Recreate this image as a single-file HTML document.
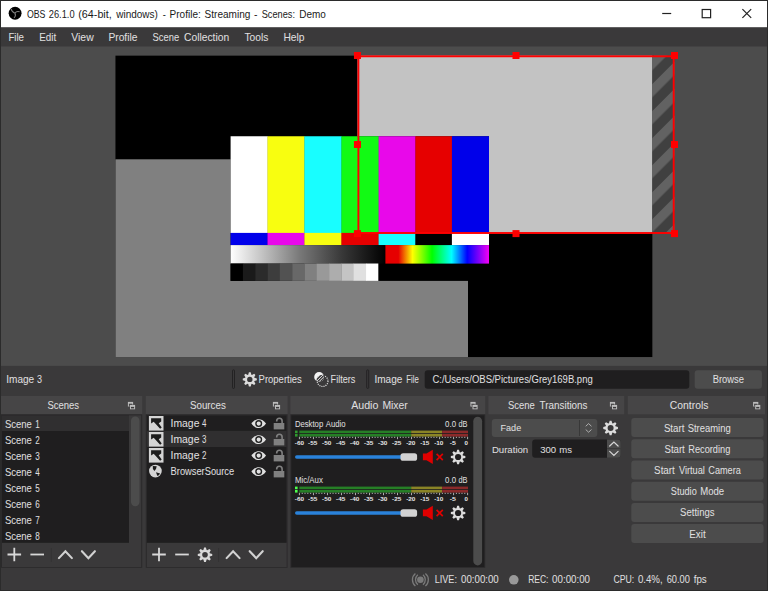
<!DOCTYPE html>
<html lang="en"><head><meta charset="utf-8"><title>OBS 26.1.0 (64-bit, windows) - Profile: Streaming - Scenes: Demo</title>
<style>
html,body{margin:0;padding:0;background:#3a393a;}
body{width:768px;height:591px;position:relative;overflow:hidden;font-family:"Liberation Sans",sans-serif;}
#bg{position:absolute;left:0;top:0;}
.t{position:absolute;white-space:nowrap;transform-origin:0 0;line-height:1;display:block;}
</style></head><body>
<svg id="bg" width="768" height="591" viewBox="0 0 768 591">
<rect x="0" y="0" width="768" height="591" fill="#3a393a"/>
<rect x="0" y="0" width="768" height="27.2" fill="#fff"/>
<rect x="0" y="46.5" width="768" height="319.4" fill="#4c4c4c"/>
<rect x="115.45" y="55.65" width="536.90" height="301.40" fill="#000"/>
<rect x="115.45" y="159.3" width="352.55" height="197.75" fill="#808080"/>
<defs><pattern id="hatch" width="19.1" height="19.1" patternUnits="userSpaceOnUse" patternTransform="translate(652.4 57) rotate(-45)"><rect width="19.1" height="19.1" fill="#626262"/><rect y="9.2" width="19.1" height="9.9" fill="#404040"/></pattern><linearGradient id="gg" x1="0" x2="1"><stop offset="0" stop-color="#fff"/><stop offset="0.2" stop-color="#c4c4c4"/><stop offset="0.448" stop-color="#787878"/><stop offset="0.72" stop-color="#383838"/><stop offset="1" stop-color="#000"/></linearGradient><linearGradient id="rb" x1="0" x2="1"><stop offset="0" stop-color="#e60000"/><stop offset="0.125" stop-color="#e60000"/><stop offset="0.262" stop-color="#ffff00"/><stop offset="0.45" stop-color="#00ff00"/><stop offset="0.639" stop-color="#00ffff"/><stop offset="0.79" stop-color="#0000ff"/><stop offset="1" stop-color="#f400f4"/></linearGradient></defs>
<rect x="357.5" y="55.5" width="294.85" height="178" fill="#c3c3c3"/>
<rect x="652.35" y="55.5" width="22.15" height="178" fill="url(#hatch)"/>
<rect x="230.60" y="136.25" width="258.40" height="144.65" fill="#000"/>
<rect x="230.60" y="136.25" width="37.20" height="96.75" fill="#ffffff"/>
<rect x="267.50" y="136.25" width="37.20" height="96.75" fill="#f8fe10"/>
<rect x="304.40" y="136.25" width="37.35" height="96.75" fill="#18feff"/>
<rect x="341.45" y="136.25" width="37.45" height="96.75" fill="#12fa14"/>
<rect x="378.60" y="136.25" width="37.10" height="96.75" fill="#e808ea"/>
<rect x="415.40" y="136.25" width="36.80" height="96.75" fill="#e60000"/>
<rect x="451.90" y="136.25" width="37.10" height="96.75" fill="#0000ea"/>
<rect x="230.60" y="232.9" width="37.20" height="12.3" fill="#0000ea"/>
<rect x="267.50" y="232.9" width="37.20" height="12.3" fill="#e808ea"/>
<rect x="304.40" y="232.9" width="37.35" height="12.3" fill="#f8fe10"/>
<rect x="341.45" y="232.9" width="37.45" height="12.3" fill="#e60000"/>
<rect x="378.60" y="232.9" width="37.10" height="12.3" fill="#18feff"/>
<rect x="415.40" y="232.9" width="36.80" height="12.3" fill="#000000"/>
<rect x="451.90" y="232.9" width="37.10" height="12.3" fill="#ffffff"/>
<rect x="230.60" y="245.1" width="155.00" height="18.5" fill="url(#gg)"/>
<rect x="385.4" y="245.1" width="103.60" height="18.5" fill="url(#rb)"/>
<rect x="230.60" y="263.5" width="12.61" height="17.4" fill="rgb(0,0,0)"/>
<rect x="242.91" y="263.5" width="12.61" height="17.4" fill="rgb(26,26,26)"/>
<rect x="255.22" y="263.5" width="12.61" height="17.4" fill="rgb(43,43,43)"/>
<rect x="267.53" y="263.5" width="12.61" height="17.4" fill="rgb(61,61,61)"/>
<rect x="279.84" y="263.5" width="12.61" height="17.4" fill="rgb(82,82,82)"/>
<rect x="292.15" y="263.5" width="12.61" height="17.4" fill="rgb(104,104,104)"/>
<rect x="304.46" y="263.5" width="12.61" height="17.4" fill="rgb(128,128,128)"/>
<rect x="316.77" y="263.5" width="12.61" height="17.4" fill="rgb(153,153,153)"/>
<rect x="329.08" y="263.5" width="12.61" height="17.4" fill="rgb(173,173,173)"/>
<rect x="341.39" y="263.5" width="12.61" height="17.4" fill="rgb(196,196,196)"/>
<rect x="353.70" y="263.5" width="12.61" height="17.4" fill="rgb(224,224,224)"/>
<rect x="366.01" y="263.5" width="12.31" height="17.4" fill="rgb(255,255,255)"/>
<rect x="358.4" y="56.3" width="315.3" height="176.7" fill="none" stroke="#ff0000" stroke-width="1.9"/>
<rect x="353.95" y="52.00" width="7" height="7" fill="#ff0000"/>
<rect x="353.95" y="141.00" width="7" height="7" fill="#ff0000"/>
<rect x="353.95" y="230.10" width="7" height="7" fill="#ff0000"/>
<rect x="512.50" y="52.00" width="7" height="7" fill="#ff0000"/>
<rect x="512.50" y="230.10" width="7" height="7" fill="#ff0000"/>
<rect x="671.00" y="52.00" width="7" height="7" fill="#ff0000"/>
<rect x="671.00" y="141.00" width="7" height="7" fill="#ff0000"/>
<rect x="671.00" y="230.10" width="7" height="7" fill="#ff0000"/>
<rect x="0" y="0" width="768" height="1" fill="#2b2b2b"/>
<rect x="0" y="0" width="1" height="591" fill="#2b2b2b"/>
<rect x="767" y="0" width="1" height="591" fill="#2b2b2b"/>
<rect x="0" y="590" width="768" height="1" fill="#2b2b2b"/>
<circle cx="15.1" cy="13.2" r="6.45" fill="#000"/>
<path d="M15 13.2 Q12 12.4 11.2 9.2 M15 13.2 Q16.4 10.8 19.6 11.8 M15 13.2 Q16.2 15.8 14 17.8" stroke="#808080" stroke-width="1.1" fill="none"/>
<path d="M662.2 13.5 h9" stroke="#222" stroke-width="1.2"/>
<rect x="702.2" y="9.5" width="8.4" height="8.2" fill="none" stroke="#222" stroke-width="1.2"/>
<path d="M742.4 9.1 l8.8 8.8 M751.2 9.1 l-8.8 8.8" stroke="#222" stroke-width="1.2"/>
<rect x="232.50" y="369.9" width="2" height="18.5" rx="0.8" fill="none" stroke="#232223" stroke-width="1"/>
<rect x="366.70" y="369.9" width="2" height="18.5" rx="0.8" fill="none" stroke="#232223" stroke-width="1"/>
<path d="M248.21 374.76 L248.91 372.36 L250.69 372.36 L251.39 374.76 L251.96 375.00 L254.15 373.79 L255.41 375.05 L254.20 377.24 L254.44 377.81 L256.84 378.51 L256.84 380.29 L254.44 380.99 L254.20 381.56 L255.41 383.75 L254.15 385.01 L251.96 383.80 L251.39 384.04 L250.69 386.44 L248.91 386.44 L248.21 384.04 L247.64 383.80 L245.45 385.01 L244.19 383.75 L245.40 381.56 L245.16 380.99 L242.76 380.29 L242.76 378.51 L245.16 377.81 L245.40 377.24 L244.19 375.05 L245.45 373.79 L247.64 375.00 Z M247.10 379.40 a2.70 2.70 0 1 0 5.40 0 a2.70 2.70 0 1 0 -5.40 0 Z" fill="#dcdcdc" fill-rule="evenodd"/>
<clipPath id="fc1"><circle cx="319.1" cy="376.9" r="4.9"/></clipPath><clipPath id="fc2"><circle cx="322.4" cy="380.8" r="6.0"/></clipPath>
<circle cx="322.6" cy="381.1" r="5.4" fill="none" stroke="#dcdcdc" stroke-width="1.2" stroke-dasharray="1.1 1.0"/>
<circle cx="319.1" cy="376.9" r="4.9" fill="#f4f4f4"/>
<g clip-path="url(#fc1)"><g clip-path="url(#fc2)"><rect x="312" y="370" width="20" height="20" fill="#3a393a"/><path d="M302.52 378.32 l16 -16 M303.94 379.74 l16 -16 M305.36 381.16 l16 -16 M306.78 382.58 l16 -16 M308.20 384.00 l16 -16 M309.62 385.42 l16 -16 M311.04 386.84 l16 -16 M312.46 388.26 l16 -16 M313.88 389.68 l16 -16 M315.30 391.10 l16 -16 M316.72 392.52 l16 -16 M318.14 393.94 l16 -16 M319.56 395.36 l16 -16 M320.98 396.78 l16 -16 M322.40 398.20 l16 -16 M323.82 399.62 l16 -16" stroke="#f0f0f0" stroke-width="0.95"/></g></g>
<rect x="424.7" y="370.3" width="264.6" height="18.4" rx="3" fill="#1f1e1f"/>
<rect x="694.7" y="370.3" width="67.2" height="18.4" rx="3" fill="#4c4c4c"/>
<rect x="1.00" y="396.0" width="141.20" height="18.3" fill="#464546"/>
<rect x="145.80" y="396.0" width="141.80" height="18.3" fill="#464546"/>
<rect x="290.40" y="396.0" width="194.80" height="18.3" fill="#464546"/>
<rect x="488.40" y="396.0" width="135.80" height="18.3" fill="#464546"/>
<rect x="627.80" y="396.0" width="137.20" height="18.3" fill="#464546"/>
<rect x="127.90" y="401.90" width="5.2" height="4.6" fill="#bcbcbc"/><rect x="128.90" y="403.70" width="3.2" height="2" fill="#464546"/><rect x="129.50" y="404.50" width="6" height="5.2" fill="#464546"/><rect x="130.00" y="404.90" width="5.1" height="4.4" fill="#bcbcbc"/><rect x="131.00" y="406.90" width="3.1" height="1.5" fill="#3a393a"/>
<rect x="272.90" y="401.90" width="5.2" height="4.6" fill="#bcbcbc"/><rect x="273.90" y="403.70" width="3.2" height="2" fill="#464546"/><rect x="274.50" y="404.50" width="6" height="5.2" fill="#464546"/><rect x="275.00" y="404.90" width="5.1" height="4.4" fill="#bcbcbc"/><rect x="276.00" y="406.90" width="3.1" height="1.5" fill="#3a393a"/>
<rect x="470.40" y="401.90" width="5.2" height="4.6" fill="#bcbcbc"/><rect x="471.40" y="403.70" width="3.2" height="2" fill="#464546"/><rect x="472.00" y="404.50" width="6" height="5.2" fill="#464546"/><rect x="472.50" y="404.90" width="5.1" height="4.4" fill="#bcbcbc"/><rect x="473.50" y="406.90" width="3.1" height="1.5" fill="#3a393a"/>
<rect x="609.90" y="401.90" width="5.2" height="4.6" fill="#bcbcbc"/><rect x="610.90" y="403.70" width="3.2" height="2" fill="#464546"/><rect x="611.50" y="404.50" width="6" height="5.2" fill="#464546"/><rect x="612.00" y="404.90" width="5.1" height="4.4" fill="#bcbcbc"/><rect x="613.00" y="406.90" width="3.1" height="1.5" fill="#3a393a"/>
<rect x="753.10" y="401.90" width="5.2" height="4.6" fill="#bcbcbc"/><rect x="754.10" y="403.70" width="3.2" height="2" fill="#464546"/><rect x="754.70" y="404.50" width="6" height="5.2" fill="#464546"/><rect x="755.20" y="404.90" width="5.1" height="4.4" fill="#bcbcbc"/><rect x="756.20" y="406.90" width="3.1" height="1.5" fill="#3a393a"/>
<rect x="1" y="414.3" width="141.2" height="153.5" fill="#2b2a2b"/>
<rect x="2" y="415.4" width="139.2" height="151.6" fill="#3a393a"/>
<rect x="2" y="415.4" width="127" height="127.4" fill="#1f1e1f"/>
<rect x="2" y="415.4" width="127" height="15.6" fill="#302f30"/>
<rect x="131.0" y="416.6" width="8.5" height="89.6" rx="4.2" fill="#4c4c4c"/>
<path d="M7.50 554.50 h13.6 M14.30 547.70 v13.6" stroke="#d8d8d8" stroke-width="1.8" fill="none"/>
<path d="M30.40 554.50 h13.6" stroke="#d8d8d8" stroke-width="1.8" fill="none"/>
<rect x="50.8" y="548" width="1" height="14" fill="#333233"/>
<path d="M58.90 558.10 L65.40 551.20 L71.90 558.10" stroke="#d2d2d2" stroke-width="2.10" stroke-linecap="round" fill="none"/>
<path d="M81.90 551.20 L88.40 558.10 L94.90 551.20" stroke="#d2d2d2" stroke-width="2.10" stroke-linecap="round" fill="none"/>
<rect x="145.8" y="414.3" width="141.8" height="153.5" fill="#2b2a2b"/>
<rect x="146.8" y="415.4" width="139.8" height="151.6" fill="#3a393a"/>
<rect x="146.8" y="415.4" width="139.8" height="127.4" fill="#1f1e1f"/>
<rect x="146.8" y="430.8" width="139.8" height="16.2" fill="#302f30"/>
<rect x="148.90" y="416.00" width="14.6" height="14.6" fill="#d4d4d4"/><polygon points="151.10,418.20 161.20,418.20 161.20,421.60 158.70,423.20 161.70,427.60 160.10,428.80 153.70,421.80 151.10,423.40" fill="#1c1c1c"/>
<rect x="148.90" y="432.00" width="14.6" height="14.6" fill="#d4d4d4"/><polygon points="151.10,434.20 161.20,434.20 161.20,437.60 158.70,439.20 161.70,443.60 160.10,444.80 153.70,437.80 151.10,439.40" fill="#1c1c1c"/>
<rect x="148.90" y="448.00" width="14.6" height="14.6" fill="#d4d4d4"/><polygon points="151.10,450.20 161.20,450.20 161.20,453.60 158.70,455.20 161.70,459.60 160.10,460.80 153.70,453.80 151.10,455.40" fill="#1c1c1c"/>
<circle cx="155.40" cy="471.10" r="6.35" fill="#d4d4d4"/><polygon points="152.80,465.90 156.70,466.30 156.10,468.70 154.50,470.90 152.90,469.10" fill="#1c1c1c"/><polygon points="156.00,472.30 160.10,473.40 158.80,475.30 157.40,476.00" fill="#1c1c1c"/>
<path d="M251.40 423.60 C255.10 417.70 262.30 417.70 266.00 423.60 C262.30 429.50 255.10 429.50 251.40 423.60 Z" fill="#e0e0e0"/><circle cx="258.70" cy="423.60" r="2.8" fill="none" stroke="#222" stroke-width="1.4"/>
<rect x="273.70" y="423.00" width="10.6" height="6.4" fill="#808080"/><path d="M276.70 421.40 v-0.5 a2.7 2.7 0 0 1 5.4 0 v2.6" fill="none" stroke="#808080" stroke-width="1.6"/>
<path d="M251.40 439.60 C255.10 433.70 262.30 433.70 266.00 439.60 C262.30 445.50 255.10 445.50 251.40 439.60 Z" fill="#e0e0e0"/><circle cx="258.70" cy="439.60" r="2.8" fill="none" stroke="#222" stroke-width="1.4"/>
<rect x="273.70" y="439.00" width="10.6" height="6.4" fill="#808080"/><path d="M276.70 437.40 v-0.5 a2.7 2.7 0 0 1 5.4 0 v2.6" fill="none" stroke="#808080" stroke-width="1.6"/>
<path d="M251.40 455.60 C255.10 449.70 262.30 449.70 266.00 455.60 C262.30 461.50 255.10 461.50 251.40 455.60 Z" fill="#e0e0e0"/><circle cx="258.70" cy="455.60" r="2.8" fill="none" stroke="#222" stroke-width="1.4"/>
<rect x="273.70" y="455.00" width="10.6" height="6.4" fill="#808080"/><path d="M276.70 453.40 v-0.5 a2.7 2.7 0 0 1 5.4 0 v2.6" fill="none" stroke="#808080" stroke-width="1.6"/>
<path d="M251.40 471.60 C255.10 465.70 262.30 465.70 266.00 471.60 C262.30 477.50 255.10 477.50 251.40 471.60 Z" fill="#e0e0e0"/><circle cx="258.70" cy="471.60" r="2.8" fill="none" stroke="#222" stroke-width="1.4"/>
<rect x="273.70" y="471.00" width="10.6" height="6.4" fill="#808080"/><path d="M276.70 469.40 v-0.5 a2.7 2.7 0 0 1 5.4 0 v2.6" fill="none" stroke="#808080" stroke-width="1.6"/>
<path d="M152.20 554.50 h13.6 M159.00 547.70 v13.6" stroke="#d8d8d8" stroke-width="1.8" fill="none"/>
<path d="M175.20 554.50 h13.6" stroke="#d8d8d8" stroke-width="1.8" fill="none"/>
<path d="M203.38 550.07 L204.09 547.56 L205.91 547.56 L206.62 550.07 L207.20 550.31 L209.47 549.03 L210.77 550.33 L209.49 552.60 L209.73 553.18 L212.24 553.89 L212.24 555.71 L209.73 556.42 L209.49 557.00 L210.77 559.27 L209.47 560.57 L207.20 559.29 L206.62 559.53 L205.91 562.04 L204.09 562.04 L203.38 559.53 L202.80 559.29 L200.53 560.57 L199.23 559.27 L200.51 557.00 L200.27 556.42 L197.76 555.71 L197.76 553.89 L200.27 553.18 L200.51 552.60 L199.23 550.33 L200.53 549.03 L202.80 550.31 Z M202.20 554.80 a2.80 2.80 0 1 0 5.60 0 a2.80 2.80 0 1 0 -5.60 0 Z" fill="#d8d8d8" fill-rule="evenodd"/>
<rect x="218.1" y="548" width="1" height="14" fill="#333233"/>
<path d="M226.60 558.10 L233.10 551.20 L239.60 558.10" stroke="#d2d2d2" stroke-width="2.10" stroke-linecap="round" fill="none"/>
<path d="M249.70 551.20 L256.20 558.10 L262.70 551.20" stroke="#d2d2d2" stroke-width="2.10" stroke-linecap="round" fill="none"/>
<rect x="290.4" y="414.3" width="194.8" height="153.5" fill="#2b2a2b"/>
<rect x="291.4" y="415.4" width="192.8" height="151.6" fill="#1f1e1f"/>
<rect x="473.3" y="416.8" width="8.8" height="148.6" rx="4.4" fill="#4c4c4c"/>
<rect x="295" y="430.60" width="2.6" height="2.6" fill="#2e9a2e"/>
<rect x="299.3" y="430.60" width="111.9" height="2.6" fill="#267f26"/>
<rect x="411.2" y="430.60" width="30.9" height="2.6" fill="#8a8426"/>
<rect x="442.1" y="430.60" width="25.9" height="2.6" fill="#8a2a2a"/>
<rect x="295" y="434.00" width="2.6" height="2.6" fill="#2e9a2e"/>
<rect x="299.3" y="434.00" width="111.9" height="2.6" fill="#267f26"/>
<rect x="411.2" y="434.00" width="30.9" height="2.6" fill="#8a8426"/>
<rect x="442.1" y="434.00" width="25.9" height="2.6" fill="#8a2a2a"/>
<path d="M467.60 436.80 v2.40 M464.80 436.80 v1.20 M461.99 436.80 v1.20 M459.19 436.80 v1.20 M456.39 436.80 v1.20 M453.59 436.80 v2.40 M450.78 436.80 v1.20 M447.98 436.80 v1.20 M445.18 436.80 v1.20 M442.37 436.80 v1.20 M439.57 436.80 v2.40 M436.77 436.80 v1.20 M433.96 436.80 v1.20 M431.16 436.80 v1.20 M428.36 436.80 v1.20 M425.56 436.80 v2.40 M422.75 436.80 v1.20 M419.95 436.80 v1.20 M417.15 436.80 v1.20 M414.34 436.80 v1.20 M411.54 436.80 v2.40 M408.74 436.80 v1.20 M405.93 436.80 v1.20 M403.13 436.80 v1.20 M400.33 436.80 v1.20 M397.53 436.80 v2.40 M394.72 436.80 v1.20 M391.92 436.80 v1.20 M389.12 436.80 v1.20 M386.31 436.80 v1.20 M383.51 436.80 v2.40 M380.71 436.80 v1.20 M377.90 436.80 v1.20 M375.10 436.80 v1.20 M372.30 436.80 v1.20 M369.50 436.80 v2.40 M366.69 436.80 v1.20 M363.89 436.80 v1.20 M361.09 436.80 v1.20 M358.28 436.80 v1.20 M355.48 436.80 v2.40 M352.68 436.80 v1.20 M349.87 436.80 v1.20 M347.07 436.80 v1.20 M344.27 436.80 v1.20 M341.47 436.80 v2.40 M338.66 436.80 v1.20 M335.86 436.80 v1.20 M333.06 436.80 v1.20 M330.25 436.80 v1.20 M327.45 436.80 v2.40 M324.65 436.80 v1.20 M321.84 436.80 v1.20 M319.04 436.80 v1.20 M316.24 436.80 v1.20 M313.44 436.80 v2.40 M310.63 436.80 v1.20 M307.83 436.80 v1.20 M305.03 436.80 v1.20 M302.22 436.80 v1.20 M299.42 436.80 v2.40 " stroke="#d4d4d4" stroke-width="0.8"/>
<rect x="295" y="455.20" width="110" height="3.5" rx="1.75" fill="#2a82da"/>
<rect x="400.5" y="453.20" width="16.6" height="7.6" rx="2.6" fill="#d2d2d2"/>
<path d="M422.9 453.50 h3.6 l6.3 -3.7 v14.2 l-6.3 -3.7 h-3.6 Z" fill="#e00000"/>
<path d="M436.6 453.90 l6.2 6.2 M442.8 453.90 l-6.2 6.2" stroke="#e00000" stroke-width="1.7"/>
<path d="M456.48 452.27 L457.19 449.76 L459.01 449.76 L459.72 452.27 L460.30 452.51 L462.57 451.23 L463.87 452.53 L462.59 454.80 L462.83 455.38 L465.34 456.09 L465.34 457.91 L462.83 458.62 L462.59 459.20 L463.87 461.47 L462.57 462.77 L460.30 461.49 L459.72 461.73 L459.01 464.24 L457.19 464.24 L456.48 461.73 L455.90 461.49 L453.63 462.77 L452.33 461.47 L453.61 459.20 L453.37 458.62 L450.86 457.91 L450.86 456.09 L453.37 455.38 L453.61 454.80 L452.33 452.53 L453.63 451.23 L455.90 452.51 Z M455.00 457.00 a3.10 3.10 0 1 0 6.20 0 a3.10 3.10 0 1 0 -6.20 0 Z" fill="#dcdcdc" fill-rule="evenodd"/>
<rect x="295" y="486.60" width="2.6" height="2.6" fill="#4cff4c"/>
<rect x="299.3" y="486.60" width="111.9" height="2.6" fill="#267f26"/>
<rect x="411.2" y="486.60" width="30.9" height="2.6" fill="#8a8426"/>
<rect x="442.1" y="486.60" width="25.9" height="2.6" fill="#8a2a2a"/>
<rect x="295" y="490.00" width="2.6" height="2.6" fill="#4cff4c"/>
<rect x="299.3" y="490.00" width="111.9" height="2.6" fill="#267f26"/>
<rect x="411.2" y="490.00" width="30.9" height="2.6" fill="#8a8426"/>
<rect x="442.1" y="490.00" width="25.9" height="2.6" fill="#8a2a2a"/>
<path d="M467.60 492.80 v2.40 M464.80 492.80 v1.20 M461.99 492.80 v1.20 M459.19 492.80 v1.20 M456.39 492.80 v1.20 M453.59 492.80 v2.40 M450.78 492.80 v1.20 M447.98 492.80 v1.20 M445.18 492.80 v1.20 M442.37 492.80 v1.20 M439.57 492.80 v2.40 M436.77 492.80 v1.20 M433.96 492.80 v1.20 M431.16 492.80 v1.20 M428.36 492.80 v1.20 M425.56 492.80 v2.40 M422.75 492.80 v1.20 M419.95 492.80 v1.20 M417.15 492.80 v1.20 M414.34 492.80 v1.20 M411.54 492.80 v2.40 M408.74 492.80 v1.20 M405.93 492.80 v1.20 M403.13 492.80 v1.20 M400.33 492.80 v1.20 M397.53 492.80 v2.40 M394.72 492.80 v1.20 M391.92 492.80 v1.20 M389.12 492.80 v1.20 M386.31 492.80 v1.20 M383.51 492.80 v2.40 M380.71 492.80 v1.20 M377.90 492.80 v1.20 M375.10 492.80 v1.20 M372.30 492.80 v1.20 M369.50 492.80 v2.40 M366.69 492.80 v1.20 M363.89 492.80 v1.20 M361.09 492.80 v1.20 M358.28 492.80 v1.20 M355.48 492.80 v2.40 M352.68 492.80 v1.20 M349.87 492.80 v1.20 M347.07 492.80 v1.20 M344.27 492.80 v1.20 M341.47 492.80 v2.40 M338.66 492.80 v1.20 M335.86 492.80 v1.20 M333.06 492.80 v1.20 M330.25 492.80 v1.20 M327.45 492.80 v2.40 M324.65 492.80 v1.20 M321.84 492.80 v1.20 M319.04 492.80 v1.20 M316.24 492.80 v1.20 M313.44 492.80 v2.40 M310.63 492.80 v1.20 M307.83 492.80 v1.20 M305.03 492.80 v1.20 M302.22 492.80 v1.20 M299.42 492.80 v2.40 " stroke="#d4d4d4" stroke-width="0.8"/>
<rect x="295" y="511.20" width="110" height="3.5" rx="1.75" fill="#2a82da"/>
<rect x="400.5" y="509.20" width="16.6" height="7.6" rx="2.6" fill="#d2d2d2"/>
<path d="M422.9 509.50 h3.6 l6.3 -3.7 v14.2 l-6.3 -3.7 h-3.6 Z" fill="#e00000"/>
<path d="M436.6 509.90 l6.2 6.2 M442.8 509.90 l-6.2 6.2" stroke="#e00000" stroke-width="1.7"/>
<path d="M456.48 508.27 L457.19 505.76 L459.01 505.76 L459.72 508.27 L460.30 508.51 L462.57 507.23 L463.87 508.53 L462.59 510.80 L462.83 511.38 L465.34 512.09 L465.34 513.91 L462.83 514.62 L462.59 515.20 L463.87 517.47 L462.57 518.77 L460.30 517.49 L459.72 517.73 L459.01 520.24 L457.19 520.24 L456.48 517.73 L455.90 517.49 L453.63 518.77 L452.33 517.47 L453.61 515.20 L453.37 514.62 L450.86 513.91 L450.86 512.09 L453.37 511.38 L453.61 510.80 L452.33 508.53 L453.63 507.23 L455.90 508.51 Z M455.00 513.00 a3.10 3.10 0 1 0 6.20 0 a3.10 3.10 0 1 0 -6.20 0 Z" fill="#dcdcdc" fill-rule="evenodd"/>
<rect x="491.8" y="419" width="105.5" height="18" rx="3" fill="#4c4c4c"/>
<rect x="579" y="420" width="1" height="16" fill="#383838"/>
<path d="M586.00 426.00 L588.60 423.60 L591.20 426.00" stroke="#b8b8b8" stroke-width="0.90" stroke-linecap="round" fill="none"/>
<path d="M586.00 429.80 L588.60 432.20 L591.20 429.80" stroke="#b8b8b8" stroke-width="0.90" stroke-linecap="round" fill="none"/>
<path d="M608.95 423.17 L609.67 420.66 L611.53 420.66 L612.25 423.17 L612.84 423.42 L615.14 422.15 L616.45 423.46 L615.18 425.76 L615.43 426.35 L617.94 427.07 L617.94 428.93 L615.43 429.65 L615.18 430.24 L616.45 432.54 L615.14 433.85 L612.84 432.58 L612.25 432.83 L611.53 435.34 L609.67 435.34 L608.95 432.83 L608.36 432.58 L606.06 433.85 L604.75 432.54 L606.02 430.24 L605.77 429.65 L603.26 428.93 L603.26 427.07 L605.77 426.35 L606.02 425.76 L604.75 423.46 L606.06 422.15 L608.36 423.42 Z M607.60 428.00 a3.00 3.00 0 1 0 6.00 0 a3.00 3.00 0 1 0 -6.00 0 Z" fill="#dcdcdc" fill-rule="evenodd"/>
<rect x="532.2" y="439.5" width="88.5" height="18.3" rx="3" fill="#1f1e1f"/>
<path d="M607 439.5 h10.7 a3 3 0 0 1 3 3 v12.3 a3 3 0 0 1 -3 3 h-10.7 Z" fill="#4c4c4c"/>
<rect x="607" y="448.3" width="13.7" height="0.8" fill="#353535"/>
<path d="M609.70 446.00 L613.90 442.00 L618.10 446.00" stroke="#d8d8d8" stroke-width="1.20" stroke-linecap="round" fill="none"/>
<path d="M609.70 451.40 L613.90 455.40 L618.10 451.40" stroke="#d8d8d8" stroke-width="1.20" stroke-linecap="round" fill="none"/>
<rect x="631.3" y="418.10" width="132.3" height="19.0" rx="3" fill="#4c4c4c"/>
<rect x="631.3" y="439.30" width="132.3" height="19.0" rx="3" fill="#4c4c4c"/>
<rect x="631.3" y="460.50" width="132.3" height="19.0" rx="3" fill="#4c4c4c"/>
<rect x="631.3" y="481.70" width="132.3" height="19.0" rx="3" fill="#4c4c4c"/>
<rect x="631.3" y="502.90" width="132.3" height="19.0" rx="3" fill="#4c4c4c"/>
<rect x="631.3" y="524.10" width="132.3" height="19.0" rx="3" fill="#4c4c4c"/>
<circle cx="420.4" cy="579.7" r="3.3" fill="#7a7a7a"/>
<path d="M417.8 574.7 a6.6 6.6 0 0 0 0 10 M423.0 574.7 a6.6 6.6 0 0 1 0 10" stroke="#7a7a7a" stroke-width="1.3" fill="none"/>
<path d="M415.4 573.4 a8.2 8.2 0 0 0 0 12.6 M425.4 573.4 a8.2 8.2 0 0 1 0 12.6" stroke="#7a7a7a" stroke-width="1.3" fill="none"/>
<circle cx="513.8" cy="579.8" r="4.8" fill="#999"/>
</svg>
<span class="t" style="left:26px;top:8px;font-size:11.50px;color:#1a1a1a;transform:translate(0.90px,0.80px) scaleX(0.7613) rotate(0.02deg)">OBS</span>
<span class="t" style="left:48px;top:8px;font-size:11.50px;color:#1a1a1a;transform:translate(0.75px,0.80px) scaleX(0.8081) rotate(0.02deg)">26.1.0</span>
<span class="t" style="left:78px;top:8px;font-size:11.50px;color:#1a1a1a;transform:translate(0.30px,0.80px) scaleX(0.9329) rotate(0.02deg)">(64-bit,</span>
<span class="t" style="left:116px;top:8px;font-size:11.50px;color:#1a1a1a;transform:translate(0.25px,0.80px) scaleX(0.8688) rotate(0.02deg)">windows)</span>
<span class="t" style="left:162px;top:8px;font-size:11.50px;color:#1a1a1a;transform:translate(0.70px,0.80px) scaleX(0.8057) rotate(0.02deg)">-</span>
<span class="t" style="left:169px;top:8px;font-size:11.50px;color:#1a1a1a;transform:translate(0.60px,0.80px) scaleX(0.8715) rotate(0.02deg)">Profile:</span>
<span class="t" style="left:204px;top:8px;font-size:11.50px;color:#1a1a1a;transform:translate(0.60px,0.80px) scaleX(0.8736) rotate(0.02deg)">Streaming</span>
<span class="t" style="left:254px;top:8px;font-size:11.50px;color:#1a1a1a;transform:translate(0.00px,0.80px) scaleX(0.9096) rotate(0.02deg)">-</span>
<span class="t" style="left:261px;top:8px;font-size:11.50px;color:#1a1a1a;transform:translate(0.70px,0.80px) scaleX(0.8011) rotate(0.02deg)">Scenes:</span>
<span class="t" style="left:299px;top:8px;font-size:11.50px;color:#1a1a1a;transform:translate(0.20px,0.80px) scaleX(0.8667) rotate(0.02deg)">Demo</span>
<span class="t" style="left:8px;top:31px;font-size:10.80px;color:#e1e0e1;transform:translate(0.40px,0.85px) scaleX(0.8960) rotate(0.02deg)">File</span>
<span class="t" style="left:39px;top:31px;font-size:10.80px;color:#e1e0e1;transform:translate(0.20px,0.85px) scaleX(0.9133) rotate(0.02deg)">Edit</span>
<span class="t" style="left:71px;top:31px;font-size:10.80px;color:#e1e0e1;transform:translate(0.30px,0.85px) scaleX(0.9646) rotate(0.02deg)">View</span>
<span class="t" style="left:108px;top:31px;font-size:10.80px;color:#e1e0e1;transform:translate(0.40px,0.85px) scaleX(0.9506) rotate(0.02deg)">Profile</span>
<span class="t" style="left:152px;top:31px;font-size:10.80px;color:#e1e0e1;transform:translate(0.60px,0.85px) scaleX(0.8685) rotate(0.02deg)">Scene</span>
<span class="t" style="left:184px;top:31px;font-size:10.80px;color:#e1e0e1;transform:translate(0.00px,0.85px) scaleX(0.9531) rotate(0.02deg)">Collection</span>
<span class="t" style="left:244px;top:31px;font-size:10.80px;color:#e1e0e1;transform:translate(0.40px,0.85px) scaleX(0.9476) rotate(0.02deg)">Tools</span>
<span class="t" style="left:283px;top:31px;font-size:10.80px;color:#e1e0e1;transform:translate(0.40px,0.85px) scaleX(0.9540) rotate(0.02deg)">Help</span>
<span class="t" style="left:6px;top:375px;font-size:10.00px;color:#e1e0e1;transform:translate(0.30px,0.20px) scaleX(1.0036) rotate(0.02deg)">Image</span>
<span class="t" style="left:37px;top:375px;font-size:10.00px;color:#e1e0e1;transform:translate(0.00px,0.20px) scaleX(0.8983) rotate(0.02deg)">3</span>
<span class="t" style="left:258px;top:375px;font-size:10.00px;color:#e1e0e1;transform:translate(0.60px,0.20px) scaleX(0.9478) rotate(0.02deg)">Properties</span>
<span class="t" style="left:330px;top:375px;font-size:10.00px;color:#e1e0e1;transform:translate(0.60px,0.20px) scaleX(0.9105) rotate(0.02deg)">Filters</span>
<span class="t" style="left:374px;top:375px;font-size:10.00px;color:#e1e0e1;transform:translate(0.40px,0.20px) scaleX(1.0036) rotate(0.02deg)">Image</span>
<span class="t" style="left:406px;top:375px;font-size:10.00px;color:#e1e0e1;transform:translate(0.20px,0.20px) scaleX(0.7750) rotate(0.02deg)">File</span>
<span class="t" style="left:432px;top:375px;font-size:10.00px;color:#e1e0e1;transform:translate(0.40px,0.20px) scaleX(0.9487) rotate(0.02deg)">C:/Users/OBS/Pictures/Grey169B.png</span>
<span class="t" style="left:712px;top:375px;font-size:10.00px;color:#e1e0e1;transform:translate(0.70px,0.20px) scaleX(0.9382) rotate(0.02deg)">Browse</span>
<span class="t" style="left:47px;top:400px;font-size:11.50px;color:#e1e0e1;transform:translate(0.40px,0.45px) scaleX(0.8263) rotate(0.02deg)">Scenes</span>
<span class="t" style="left:190px;top:400px;font-size:11.50px;color:#e1e0e1;transform:translate(0.00px,0.45px) scaleX(0.8485) rotate(0.02deg)">Sources</span>
<span class="t" style="left:351px;top:400px;font-size:11.50px;color:#e1e0e1;transform:translate(0.20px,0.45px) scaleX(0.9244) rotate(0.02deg)">Audio</span>
<span class="t" style="left:382px;top:400px;font-size:11.50px;color:#e1e0e1;transform:translate(0.40px,0.45px) scaleX(0.9030) rotate(0.02deg)">Mixer</span>
<span class="t" style="left:508px;top:400px;font-size:11.50px;color:#e1e0e1;transform:translate(0.00px,0.45px) scaleX(0.8217) rotate(0.02deg)">Scene</span>
<span class="t" style="left:539px;top:400px;font-size:11.50px;color:#e1e0e1;transform:translate(0.60px,0.45px) scaleX(0.8579) rotate(0.02deg)">Transitions</span>
<span class="t" style="left:669px;top:400px;font-size:11.50px;color:#e1e0e1;transform:translate(0.80px,0.45px) scaleX(0.9012) rotate(0.02deg)">Controls</span>
<span class="t" style="left:4px;top:419px;font-size:11.50px;color:#e1e0e1;transform:translate(0.90px,0.15px) scaleX(0.8248) rotate(0.02deg)">Scene</span>
<span class="t" style="left:35px;top:419px;font-size:11.50px;color:#e1e0e1;transform:translate(0.20px,0.15px) scaleX(0.7020) rotate(0.02deg)">1</span>
<span class="t" style="left:4px;top:435px;font-size:11.50px;color:#e1e0e1;transform:translate(0.90px,0.15px) scaleX(0.8248) rotate(0.02deg)">Scene</span>
<span class="t" style="left:35px;top:435px;font-size:11.50px;color:#e1e0e1;transform:translate(0.20px,0.15px) scaleX(0.7020) rotate(0.02deg)">2</span>
<span class="t" style="left:4px;top:451px;font-size:11.50px;color:#e1e0e1;transform:translate(0.90px,0.15px) scaleX(0.8248) rotate(0.02deg)">Scene</span>
<span class="t" style="left:35px;top:451px;font-size:11.50px;color:#e1e0e1;transform:translate(0.20px,0.15px) scaleX(0.7020) rotate(0.02deg)">3</span>
<span class="t" style="left:4px;top:467px;font-size:11.50px;color:#e1e0e1;transform:translate(0.90px,0.15px) scaleX(0.8248) rotate(0.02deg)">Scene</span>
<span class="t" style="left:35px;top:467px;font-size:11.50px;color:#e1e0e1;transform:translate(0.20px,0.15px) scaleX(0.7020) rotate(0.02deg)">4</span>
<span class="t" style="left:4px;top:483px;font-size:11.50px;color:#e1e0e1;transform:translate(0.90px,0.15px) scaleX(0.8248) rotate(0.02deg)">Scene</span>
<span class="t" style="left:35px;top:483px;font-size:11.50px;color:#e1e0e1;transform:translate(0.20px,0.15px) scaleX(0.7020) rotate(0.02deg)">5</span>
<span class="t" style="left:4px;top:499px;font-size:11.50px;color:#e1e0e1;transform:translate(0.90px,0.15px) scaleX(0.8248) rotate(0.02deg)">Scene</span>
<span class="t" style="left:35px;top:499px;font-size:11.50px;color:#e1e0e1;transform:translate(0.20px,0.15px) scaleX(0.7020) rotate(0.02deg)">6</span>
<span class="t" style="left:4px;top:515px;font-size:11.50px;color:#e1e0e1;transform:translate(0.90px,0.15px) scaleX(0.8248) rotate(0.02deg)">Scene</span>
<span class="t" style="left:35px;top:515px;font-size:11.50px;color:#e1e0e1;transform:translate(0.20px,0.15px) scaleX(0.7020) rotate(0.02deg)">7</span>
<span class="t" style="left:4px;top:531px;font-size:11.50px;color:#e1e0e1;transform:translate(0.90px,0.15px) scaleX(0.8248) rotate(0.02deg)">Scene</span>
<span class="t" style="left:35px;top:531px;font-size:11.50px;color:#e1e0e1;transform:translate(0.20px,0.15px) scaleX(0.7020) rotate(0.02deg)">8</span>
<span class="t" style="left:170px;top:419px;font-size:10.00px;color:#e1e0e1;transform:translate(0.60px,0.00px) scaleX(1.0360) rotate(0.02deg)">Image</span>
<span class="t" style="left:201px;top:419px;font-size:10.00px;color:#e1e0e1;transform:translate(0.90px,0.00px) scaleX(0.7905) rotate(0.02deg)">4</span>
<span class="t" style="left:170px;top:435px;font-size:10.00px;color:#e1e0e1;transform:translate(0.60px,0.00px) scaleX(1.0360) rotate(0.02deg)">Image</span>
<span class="t" style="left:201px;top:435px;font-size:10.00px;color:#e1e0e1;transform:translate(0.90px,0.00px) scaleX(0.7905) rotate(0.02deg)">3</span>
<span class="t" style="left:170px;top:451px;font-size:10.00px;color:#e1e0e1;transform:translate(0.60px,0.00px) scaleX(1.0360) rotate(0.02deg)">Image</span>
<span class="t" style="left:201px;top:451px;font-size:10.00px;color:#e1e0e1;transform:translate(0.90px,0.00px) scaleX(0.7905) rotate(0.02deg)">2</span>
<span class="t" style="left:170px;top:467px;font-size:10.00px;color:#e1e0e1;transform:translate(0.60px,0.00px) scaleX(0.9303) rotate(0.02deg)">BrowserSource</span>
<span class="t" style="left:294px;top:420px;font-size:8.40px;color:#e1e0e1;transform:translate(0.90px,0.00px) scaleX(0.9207) rotate(0.02deg)">Desktop</span>
<span class="t" style="left:325px;top:420px;font-size:8.40px;color:#e1e0e1;transform:translate(0.80px,0.00px) scaleX(0.9195) rotate(0.02deg)">Audio</span>
<span class="t" style="left:445px;top:420px;font-size:8.40px;color:#e1e0e1;transform:translate(0.10px,0.00px) scaleX(0.9349) rotate(0.02deg)">0.0</span>
<span class="t" style="left:458px;top:420px;font-size:8.40px;color:#e1e0e1;transform:translate(0.40px,0.00px) scaleX(0.8778) rotate(0.02deg)">dB</span>
<span class="t" style="left:294px;top:476px;font-size:8.40px;color:#e1e0e1;transform:translate(0.90px,0.00px) scaleX(0.9396) rotate(0.02deg)">Mic/Aux</span>
<span class="t" style="left:445px;top:476px;font-size:8.40px;color:#e1e0e1;transform:translate(0.10px,0.00px) scaleX(0.9349) rotate(0.02deg)">0.0</span>
<span class="t" style="left:458px;top:476px;font-size:8.40px;color:#e1e0e1;transform:translate(0.40px,0.00px) scaleX(0.8778) rotate(0.02deg)">dB</span>
<span class="t" style="left:500px;top:423px;font-size:9.90px;color:#e1e0e1;transform:translate(0.50px,0.35px) scaleX(0.9192) rotate(0.02deg)">Fade</span>
<span class="t" style="left:491px;top:444px;font-size:9.90px;color:#e1e0e1;transform:translate(0.90px,0.75px) scaleX(0.9724) rotate(0.02deg)">Duration</span>
<span class="t" style="left:540px;top:444px;font-size:9.90px;color:#e1e0e1;transform:translate(0.20px,0.75px) scaleX(0.9704) rotate(0.02deg)">300</span>
<span class="t" style="left:559px;top:444px;font-size:9.90px;color:#e1e0e1;transform:translate(0.20px,0.75px) scaleX(0.9639) rotate(0.02deg)">ms</span>
<span class="t" style="left:663px;top:423px;font-size:10.00px;color:#e1e0e1;transform:translate(0.90px,0.50px) scaleX(0.9703) rotate(0.02deg)">Start</span>
<span class="t" style="left:687px;top:423px;font-size:10.00px;color:#e1e0e1;transform:translate(0.70px,0.50px) scaleX(0.9434) rotate(0.02deg)">Streaming</span>
<span class="t" style="left:664px;top:444px;font-size:10.00px;color:#e1e0e1;transform:translate(0.50px,0.70px) scaleX(0.9608) rotate(0.02deg)">Start</span>
<span class="t" style="left:688px;top:444px;font-size:10.00px;color:#e1e0e1;transform:translate(0.30px,0.70px) scaleX(0.9211) rotate(0.02deg)">Recording</span>
<span class="t" style="left:654px;top:465px;font-size:10.00px;color:#e1e0e1;transform:translate(0.10px,0.90px) scaleX(0.9797) rotate(0.02deg)">Start</span>
<span class="t" style="left:678px;top:465px;font-size:10.00px;color:#e1e0e1;transform:translate(0.90px,0.90px) scaleX(0.9228) rotate(0.02deg)">Virtual</span>
<span class="t" style="left:708px;top:465px;font-size:10.00px;color:#e1e0e1;transform:translate(0.30px,0.90px) scaleX(0.9134) rotate(0.02deg)">Camera</span>
<span class="t" style="left:670px;top:487px;font-size:10.00px;color:#e1e0e1;transform:translate(0.80px,0.10px) scaleX(0.9149) rotate(0.02deg)">Studio</span>
<span class="t" style="left:700px;top:487px;font-size:10.00px;color:#e1e0e1;transform:translate(0.20px,0.10px) scaleX(0.9553) rotate(0.02deg)">Mode</span>
<span class="t" style="left:680px;top:508px;font-size:10.00px;color:#e1e0e1;transform:translate(0.10px,0.30px) scaleX(0.9545) rotate(0.02deg)">Settings</span>
<span class="t" style="left:689px;top:529px;font-size:10.00px;color:#e1e0e1;transform:translate(0.30px,0.50px) scaleX(0.9775) rotate(0.02deg)">Exit</span>
<span class="t" style="left:434px;top:575px;font-size:10.00px;color:#e1e0e1;transform:translate(0.70px,0.20px) scaleX(0.9112) rotate(0.02deg)">LIVE:</span>
<span class="t" style="left:461px;top:575px;font-size:10.00px;color:#e1e0e1;transform:translate(0.10px,0.20px) scaleX(0.9656) rotate(0.02deg)">00:00:00</span>
<span class="t" style="left:528px;top:575px;font-size:10.00px;color:#e1e0e1;transform:translate(0.20px,0.20px) scaleX(0.8490) rotate(0.02deg)">REC:</span>
<span class="t" style="left:552px;top:575px;font-size:10.00px;color:#e1e0e1;transform:translate(0.10px,0.20px) scaleX(0.9733) rotate(0.02deg)">00:00:00</span>
<span class="t" style="left:613px;top:575px;font-size:10.00px;color:#e1e0e1;transform:translate(0.50px,0.20px) scaleX(0.8699) rotate(0.02deg)">CPU:</span>
<span class="t" style="left:637px;top:575px;font-size:10.00px;color:#e1e0e1;transform:translate(0.90px,0.20px) scaleX(0.9655) rotate(0.02deg)">0.4%,</span>
<span class="t" style="left:666px;top:575px;font-size:10.00px;color:#e1e0e1;transform:translate(0.70px,0.20px) scaleX(0.9267) rotate(0.02deg)">60.00</span>
<span class="t" style="left:693px;top:575px;font-size:10.00px;color:#e1e0e1;transform:translate(0.70px,0.20px) scaleX(0.9740) rotate(0.02deg)">fps</span>
<span class="t" style="left:464px;top:439px;font-size:6.00px;color:#e8e8e8;font-weight:bold;transform:translate(0.40px,0.65px) scaleX(1.0162) rotate(0.02deg)">0</span>
<span class="t" style="left:449px;top:439px;font-size:6.00px;color:#e8e8e8;font-weight:bold;transform:translate(0.69px,0.65px) scaleX(1.1598) rotate(0.02deg)">-5</span>
<span class="t" style="left:434px;top:439px;font-size:6.00px;color:#e8e8e8;font-weight:bold;transform:translate(0.17px,0.65px) scaleX(1.0606) rotate(0.02deg)">-10</span>
<span class="t" style="left:420px;top:439px;font-size:6.00px;color:#e8e8e8;font-weight:bold;transform:translate(0.15px,0.65px) scaleX(1.0606) rotate(0.02deg)">-15</span>
<span class="t" style="left:406px;top:439px;font-size:6.00px;color:#e8e8e8;font-weight:bold;transform:translate(0.14px,0.65px) scaleX(1.0606) rotate(0.02deg)">-20</span>
<span class="t" style="left:392px;top:439px;font-size:6.00px;color:#e8e8e8;font-weight:bold;transform:translate(0.12px,0.65px) scaleX(1.0606) rotate(0.02deg)">-25</span>
<span class="t" style="left:378px;top:439px;font-size:6.00px;color:#e8e8e8;font-weight:bold;transform:translate(0.11px,0.65px) scaleX(1.0606) rotate(0.02deg)">-30</span>
<span class="t" style="left:364px;top:439px;font-size:6.00px;color:#e8e8e8;font-weight:bold;transform:translate(0.09px,0.65px) scaleX(1.0606) rotate(0.02deg)">-35</span>
<span class="t" style="left:350px;top:439px;font-size:6.00px;color:#e8e8e8;font-weight:bold;transform:translate(0.08px,0.65px) scaleX(1.0606) rotate(0.02deg)">-40</span>
<span class="t" style="left:336px;top:439px;font-size:6.00px;color:#e8e8e8;font-weight:bold;transform:translate(0.06px,0.65px) scaleX(1.0606) rotate(0.02deg)">-45</span>
<span class="t" style="left:322px;top:439px;font-size:6.00px;color:#e8e8e8;font-weight:bold;transform:translate(0.05px,0.65px) scaleX(1.0606) rotate(0.02deg)">-50</span>
<span class="t" style="left:308px;top:439px;font-size:6.00px;color:#e8e8e8;font-weight:bold;transform:translate(0.04px,0.65px) scaleX(1.0606) rotate(0.02deg)">-55</span>
<span class="t" style="left:294px;top:439px;font-size:6.00px;color:#e8e8e8;font-weight:bold;transform:translate(0.82px,0.65px) scaleX(1.0606) rotate(0.02deg)">-60</span>
<span class="t" style="left:464px;top:495px;font-size:6.00px;color:#e8e8e8;font-weight:bold;transform:translate(0.40px,0.65px) scaleX(1.0162) rotate(0.02deg)">0</span>
<span class="t" style="left:449px;top:495px;font-size:6.00px;color:#e8e8e8;font-weight:bold;transform:translate(0.69px,0.65px) scaleX(1.1598) rotate(0.02deg)">-5</span>
<span class="t" style="left:434px;top:495px;font-size:6.00px;color:#e8e8e8;font-weight:bold;transform:translate(0.17px,0.65px) scaleX(1.0606) rotate(0.02deg)">-10</span>
<span class="t" style="left:420px;top:495px;font-size:6.00px;color:#e8e8e8;font-weight:bold;transform:translate(0.15px,0.65px) scaleX(1.0606) rotate(0.02deg)">-15</span>
<span class="t" style="left:406px;top:495px;font-size:6.00px;color:#e8e8e8;font-weight:bold;transform:translate(0.14px,0.65px) scaleX(1.0606) rotate(0.02deg)">-20</span>
<span class="t" style="left:392px;top:495px;font-size:6.00px;color:#e8e8e8;font-weight:bold;transform:translate(0.12px,0.65px) scaleX(1.0606) rotate(0.02deg)">-25</span>
<span class="t" style="left:378px;top:495px;font-size:6.00px;color:#e8e8e8;font-weight:bold;transform:translate(0.11px,0.65px) scaleX(1.0606) rotate(0.02deg)">-30</span>
<span class="t" style="left:364px;top:495px;font-size:6.00px;color:#e8e8e8;font-weight:bold;transform:translate(0.09px,0.65px) scaleX(1.0606) rotate(0.02deg)">-35</span>
<span class="t" style="left:350px;top:495px;font-size:6.00px;color:#e8e8e8;font-weight:bold;transform:translate(0.08px,0.65px) scaleX(1.0606) rotate(0.02deg)">-40</span>
<span class="t" style="left:336px;top:495px;font-size:6.00px;color:#e8e8e8;font-weight:bold;transform:translate(0.06px,0.65px) scaleX(1.0606) rotate(0.02deg)">-45</span>
<span class="t" style="left:322px;top:495px;font-size:6.00px;color:#e8e8e8;font-weight:bold;transform:translate(0.05px,0.65px) scaleX(1.0606) rotate(0.02deg)">-50</span>
<span class="t" style="left:308px;top:495px;font-size:6.00px;color:#e8e8e8;font-weight:bold;transform:translate(0.04px,0.65px) scaleX(1.0606) rotate(0.02deg)">-55</span>
<span class="t" style="left:294px;top:495px;font-size:6.00px;color:#e8e8e8;font-weight:bold;transform:translate(0.82px,0.65px) scaleX(1.0606) rotate(0.02deg)">-60</span>
</body></html>
